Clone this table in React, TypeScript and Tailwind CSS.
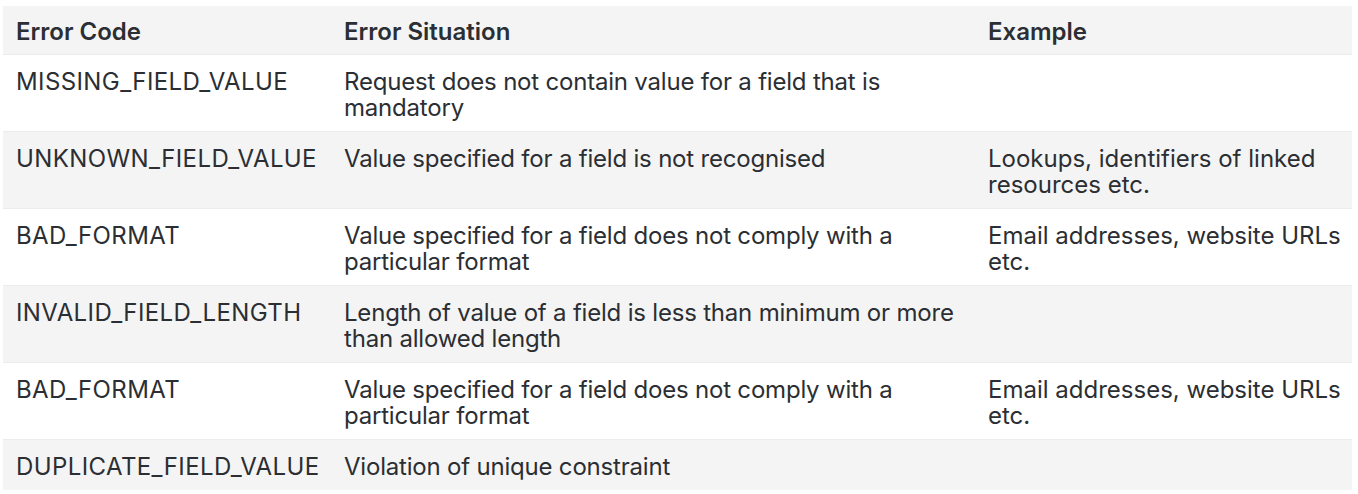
const rows = [
  { code: 'MISSING_FIELD_VALUE', situation: 'Request does not contain value for a field that is mandatory', example: '' },
  { code: 'UNKNOWN_FIELD_VALUE', situation: 'Value specified for a field is not recognised', example: 'Lookups, identifiers of linked resources etc.' },
  { code: 'BAD_FORMAT', situation: 'Value specified for a field does not comply with a particular format', example: 'Email addresses, website URLs etc.' },
  { code: 'INVALID_FIELD_LENGTH', situation: 'Length of value of a field is less than minimum or more than allowed length', example: '' },
  { code: 'BAD_FORMAT', situation: 'Value specified for a field does not comply with a particular format', example: 'Email addresses, website URLs etc.' },
  { code: 'DUPLICATE_FIELD_VALUE', situation: 'Violation of unique constraint', example: '' },
]

export default function App() {
  return (
    <div className="bg-white w-[1358px] h-[494px] pt-[6px] pl-[3px] font-['Inter',sans-serif] text-[#2b2e33]">
      <div className="w-[1349px]">
        {/* header */}
        <div className="grid grid-cols-[328px_644px_377px] h-12 pt-1 items-center bg-[#f4f4f4] text-[24px] leading-[26px] font-semibold">
          <div className="pl-[13px]">Error Code</div>
          <div className="pl-[13px]">Error Situation</div>
          <div className="pl-[13px]">Example</div>
        </div>
        {/* rows */}
        {rows.map((r, i) => (
          <div
            key={i}
            className={`grid grid-cols-[328px_644px_377px] border-t border-[#ececec] pt-[14px] pb-[10px] text-[24px] leading-[26px] ${i % 2 === 1 ? 'bg-[#f4f4f4]' : 'bg-white'}`}
          >
            <div className="pl-[13px] tracking-[0.4px]">{r.code}</div>
            <div className="pl-[13px] -mr-2 tracking-[-0.2px]">{r.situation}</div>
            <div className="pl-[13px] pr-2">{r.example}</div>
          </div>
        ))}
      </div>
    </div>
  )
}
